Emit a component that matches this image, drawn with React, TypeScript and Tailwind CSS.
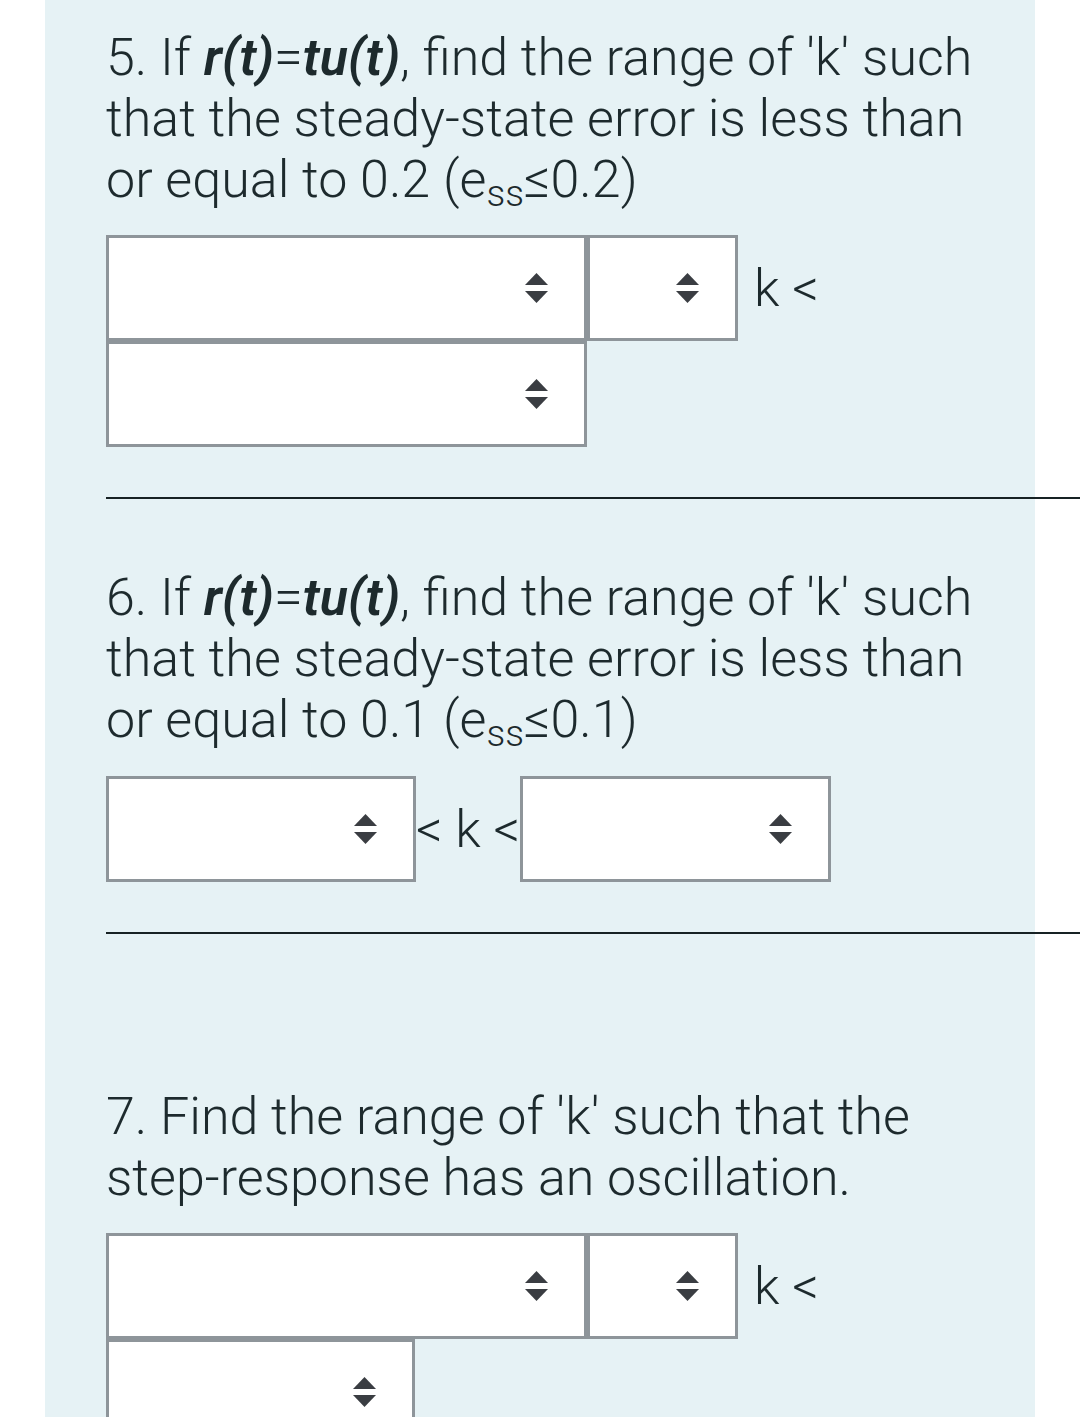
import React from 'react';

const Chevrons: React.FC = () => (
    <svg width="23" height="30" viewBox="0 0 23 30" className="shrink-0">
        <polygon points="0,12 11.5,0 23,12" fill="#3a3d42" />
        <polygon points="0,18 23,18 11.5,30" fill="#3a3d42" />
    </svg>
);

const Select: React.FC<{ w: string }> = ({ w }) => (
    <div className={`flex h-[106px] shrink-0 items-center justify-end border-[3px] border-[#8e959a] bg-white pr-[36px] ${w}`}>
        <Chevrons />
    </div>
);

const Ess: React.FC<{ v: string }> = ({ v }) => (
    <>
        (e<span className="relative top-[9px] text-[37px] leading-[0]">ss</span>
        <span className="leading-[0]">≤</span>
        {v})
    </>
);

const Rt: React.FC = () => (
    <>
        <b className="font-semibold italic">r(t)</b>=<b className="font-semibold italic">tu(t)</b>
    </>
);

const Rule: React.FC<{ mt: string }> = ({ mt }) => <div className={`h-[2px] w-[1000px] bg-[#172224] ${mt}`} />;

export default function App() {
    return (
        <div className="min-h-[1417px] w-[1080px] overflow-hidden bg-white font-[family-name:Roboto,'Noto_Sans',sans-serif] font-light text-[#1d2a2d]">
            <div className="ml-[45px] min-h-[1417px] w-[990px] bg-[#e6f2f5] pl-[61px] pt-[27px] text-[52px] leading-[61px]">
                {/* question 5 */}
                <p className="w-[880px]">
                    5. If <Rt />, find the range of 'k' such that the steady-state error is less than or equal to 0.2 <Ess v="0.2" />
                </p>
                <div className="mt-[25px]">
                    <div className="flex items-center">
                        <Select w="w-[481px]" />
                        <Select w="w-[151px]" />
                        <span className="ml-[16px]">k &lt;</span>
                    </div>
                    <div className="flex">
                        <Select w="w-[481px]" />
                    </div>
                </div>
                <Rule mt="mt-[50px]" />

                {/* question 6 */}
                <p className="mt-[68px] w-[880px]">
                    6. If <Rt />, find the range of 'k' such that the steady-state error is less than or equal to 0.1 <Ess v="0.1" />
                </p>
                <div className="mt-[26px] flex items-center">
                    <Select w="w-[310px]" />
                    <span className="whitespace-pre">&lt; k &lt;</span>
                    <Select w="w-[311px]" />
                </div>
                <Rule mt="mt-[50px]" />

                {/* question 7 */}
                <p className="mt-[152px] w-[880px]">7. Find the range of 'k' such that the step-response has an oscillation.</p>
                <div className="mt-[25px]">
                    <div className="flex items-center">
                        <Select w="w-[481px]" />
                        <Select w="w-[151px]" />
                        <span className="ml-[16px]">k &lt;</span>
                    </div>
                    <div className="flex">
                        <Select w="w-[309px]" />
                    </div>
                </div>
            </div>
        </div>
    );
}
